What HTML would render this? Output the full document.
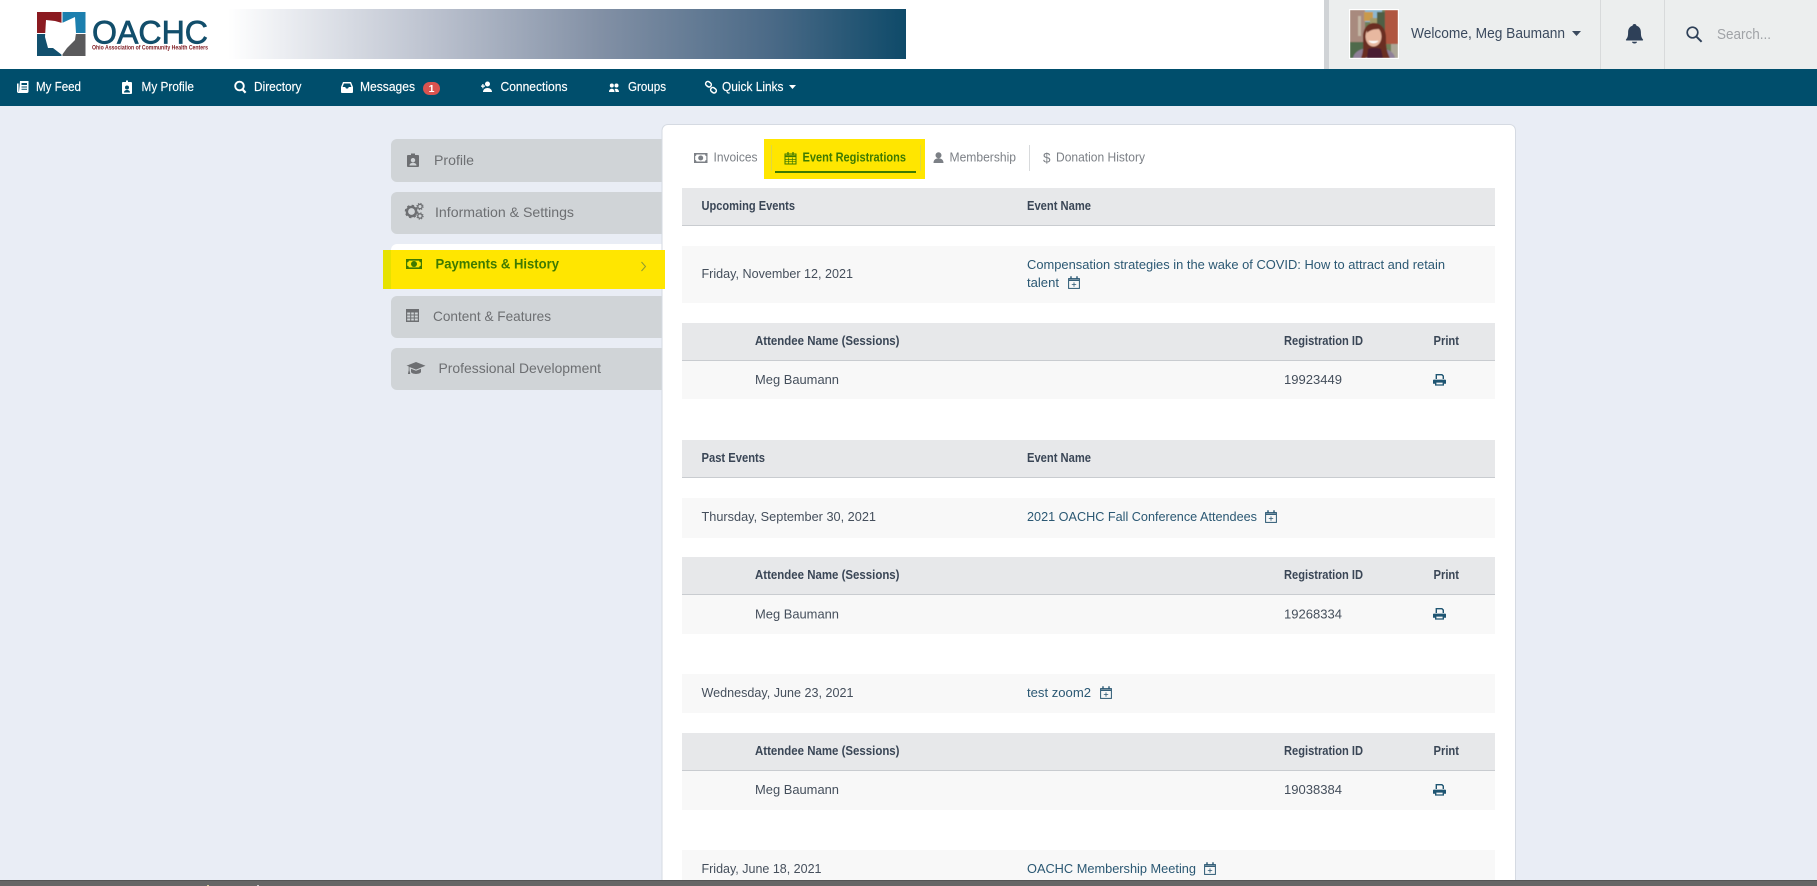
<!DOCTYPE html>
<html lang="en">
<head>
<meta charset="utf-8">
<title>Payments &amp; History</title>
<style>
html,body{margin:0;padding:0;width:1817px;height:886px;overflow:hidden;background:#e9edf5}
svg{display:block;position:absolute;left:0;top:0}
text{font-family:"Liberation Sans",Arial,sans-serif;font-size:13px;fill:#3d4a5a}
.nav{fill:#fff;stroke:#fff;stroke-width:.15;font-size:13px}
.th{font-weight:bold;font-size:12.5px;fill:#3a4656}
.td{fill:#454f5c}
.lnk{fill:#2b5873}
.side{font-size:14px;fill:#6d6f72}
.tab{font-size:12.5px;fill:#7c8086}
</style>
</head>
<body>
<svg width="1817" height="886" viewBox="0 0 1817 886" xmlns="http://www.w3.org/2000/svg">
<defs>
<linearGradient id="ban" x1="0" x2="1" y1="0" y2="0">
<stop offset="0" stop-color="#fff"/>
<stop offset=".08" stop-color="#eceef2"/>
<stop offset=".3" stop-color="#bcc2cf"/>
<stop offset=".55" stop-color="#8290a5"/>
<stop offset=".8" stop-color="#4b6a87"/>
<stop offset="1" stop-color="#0e4a69"/>
</linearGradient>
<filter id="soft" x="-5%" y="-5%" width="110%" height="110%"><feGaussianBlur stdDeviation=".45"/></filter>
<g id="cal" fill="none" stroke="#2b5873">
<rect x=".6" y="2.6" width="10.8" height="9.8" stroke-width="1"/>
<path d="M.6 4.200h10.800" stroke-width="1.500"/>
<path d="M3 .2v2.800M9 .2v2.800" stroke-width="1.400"/>
<path d="M6 6.400v4.400M3.800 8.600h4.400" stroke-width=".8"/>
</g>
<g id="prt" fill="#1f5572">
<path d="M2.600 0h6.600l1.800 1.800V5H9.600V2.400L8.600 1.400H4V5H2.600zM.8 5.600h11.400c.5 0 .8.400.8.800v3.400h-2v1.800H2v-1.800H0V6.400c0-.400.300-.8.800-.8zM3.400 8.600v1.800h6.200V8.600z"/>
</g>
</defs>

<!-- page -->
<rect width="1817" height="886" fill="#e9edf5"/>

<!-- header -->
<rect width="1817" height="69" fill="#fff"/>
<rect x="37" y="12" width="24.500" height="21" fill="#8a1a20"/>
<rect x="62.500" y="12" width="23" height="21" fill="#1c7fae"/>
<rect x="37" y="34" width="24.500" height="22" fill="#12506e"/>
<rect x="62.500" y="34" width="23" height="22" fill="#5a5a5c"/>
<polygon points="46,20 55,21 62,23 75,17 76,33 75,40 67,48 62,55 53,48 48,48 45,37" fill="#fff"/>
<text x="92" y="43.500" style="font-size:32px;fill:#124e6b;stroke:#124e6b;stroke-width:.7" textLength="116" lengthAdjust="spacingAndGlyphs">OACHC</text>
<text x="92" y="49.500" style="font-size:6.500px;font-weight:bold;fill:#7d1a20" textLength="116" lengthAdjust="spacingAndGlyphs">Ohio Association of Community Health Centers</text>
<rect x="228" y="9" width="678" height="50" fill="url(#ban)"/>

<rect x="1324" y="0" width="5" height="69" fill="#d0d3d6"/>
<rect x="1329" y="0" width="488" height="69" fill="#eceeee"/>
<rect x="1600" y="0" width="1" height="69" fill="#d8dadb"/>
<rect x="1664" y="0" width="1" height="69" fill="#d8dadb"/>

<!-- avatar -->
<rect x="1349" y="9" width="50" height="50" fill="#fff"/>
<svg x="1350" y="10" width="48" height="48" viewBox="0 0 48 48">
<g filter="url(#soft)">
<rect width="48" height="48" fill="#6f7f58"/>
<rect width="15" height="32" fill="#a88a7e"/>
<rect x="8" y="6" width="3" height="20" fill="#c4b6a4"/>
<rect x="15" width="17" height="12" fill="#8db8d0"/>
<rect x="14" y="2" width="9" height="9" fill="#c99a4c"/>
<rect x="20" y="8" width="10" height="12" fill="#a39a6a"/>
<rect x="27" y="2" width="8" height="20" fill="#4f5f44"/>
<rect x="35" width="13" height="34" fill="#b0563f"/>
<rect y="32" width="15" height="16" fill="#4f6a4c"/>
<rect x="41" y="34" width="7" height="14" fill="#aca696"/>
<path d="M3 48c1-6 7-9 14-10h14c7 1 13 4 14 10z" fill="#8f8098"/>
<path d="M11 48c3-7 2-14 2-21 0-9 5-14 11-14 7 0 12 6 12 14 0 7 0 14 4 21H33l-9-4-9 4z" fill="#6b2d22"/>
<ellipse cx="23.500" cy="26.500" rx="8" ry="10" fill="#e8b8a0"/>
<path d="M17 16c3-2 10-2 14 3-5 0-10 0-14 4z" fill="#6b2d22"/>
<path d="M18 39c3-1.500 10-1.500 13 0l2 9H17z" fill="#4a1e30"/>
<path d="M19 31c2.500 2.500 6.500 2.500 9 0-2 .6-7 .6-9 0z" fill="#fff" stroke="#fff" stroke-width=".8"/>
</g>
</svg>
<text x="1411" y="38" style="font-size:14.500px;fill:#3b4a5e" textLength="154" lengthAdjust="spacingAndGlyphs">Welcome, Meg Baumann</text>
<path d="M1572 31h9l-4.500 5z" fill="#3b4a5e"/>
<!-- bell -->
<path d="M1634.500 24c1.200 0 2 .8 2 1.800 3 .8 4.400 3.300 4.400 6.500 0 4 .6 5.500 2.100 7.200.3.400.1 1-.5 1h-16c-.6 0-.8-.6-.5-1 1.500-1.700 2.100-3.200 2.100-7.200 0-3.200 1.400-5.700 4.400-6.500 0-1 .8-1.800 2-1.800zM1632 41.800h5c0 1.200-1.100 1.700-2.500 1.700s-2.500-.5-2.500-1.700z" fill="#2e4058"/>
<!-- search -->
<circle cx="1692.500" cy="32.500" r="5.300" fill="none" stroke="#2e4058" stroke-width="1.700"/>
<path d="M1696.600 36.800l5 5" stroke="#2e4058" stroke-width="2"/>
<text x="1717" y="39" style="font-size:14.500px;fill:#a0a3a7" textLength="54" lengthAdjust="spacingAndGlyphs">Search...</text>

<!-- nav -->
<rect y="69" width="1817" height="37" fill="#004e6c"/>
<g fill="#fff">
<path d="M20 81h8.500v10.500c0 .8-.6 1.500-1.500 1.500h-8.500c-.8 0-1.500-.7-1.500-1.500V83.500h1.600v8c0 .3.300.3.400 0zM21.500 83v2h5.500v-2zM21.500 86.500v1h5.500v-1zM21.500 88.700v1h5.500v-1z" fill-rule="evenodd"/>
<path d="M123 82h3v-1.500h2V82h3c.6 0 1 .4 1 1v10c0 .6-.4 1-1 1h-8c-.6 0-1-.4-1-1V83c0-.6.400-1 1-1zm4 3.500a2 2 0 1 0 0 4 2 2 0 0 0 0-4zm-3 7h6c0-1.500-1.200-2.500-3-2.500s-3 1-3 2.500z" fill-rule="evenodd"/>
<path d="M343 82h8l2 5v5c0 .6-.4 1-1 1h-10c-.6 0-1-.4-1-1v-5zm.9 1.500L342.600 87h2.600l.8 1.500h2l.8-1.500h2.600l-1.300-3.500z" fill-rule="evenodd"/>
<path d="M485 84a2.500 2.500 0 1 1 5 0 2.500 2.500 0 0 1-5 0zM483 92c0-2.400 2-4 4.500-4s4.500 1.600 4.500 4zM481 85.500h1.300v-1.500h1.200v1.500h1.500v1.200h-1.500v1.500h-1.200v-1.500H481z"/>
<path d="M609 92c0-2 1.200-3.200 2.800-3.200S614.500 90 614.500 92zM615.500 92c0-1.200-.4-2.200-1-3 .5-.2 1-.3 1.500-.3 1.800 0 3 1.300 3 3.300zM609.800 85.500a2 2 0 1 1 4 0 2 2 0 0 1-4 0zM614.500 85.500a2 2 0 1 1 4 0 2 2 0 0 1-4 0z"/>
<path d="M789 85h7l-3.500 4z"/>
</g>
<g fill="none" stroke="#fff">
<circle cx="239.500" cy="86" r="4.300" stroke-width="1.900"/>
<path d="M242.600 89.500l3 3.200" stroke-width="2.200"/>
<rect x="705.500" y="82" width="6" height="4.500" rx="2.200" stroke-width="1.500" transform="rotate(38 708.500 84.200)"/>
<rect x="710.500" y="88" width="6" height="4.500" rx="2.200" stroke-width="1.500" transform="rotate(38 713.500 90.200)"/>
</g>
<text class="nav" x="36" y="91" textLength="45" lengthAdjust="spacingAndGlyphs">My Feed</text>
<text class="nav" x="141.500" y="91" textLength="52.500" lengthAdjust="spacingAndGlyphs">My Profile</text>
<text class="nav" x="254" y="91" textLength="47.500" lengthAdjust="spacingAndGlyphs">Directory</text>
<text class="nav" x="360" y="91" textLength="55" lengthAdjust="spacingAndGlyphs">Messages</text>
<rect x="423" y="82" width="17" height="13" rx="6.500" fill="#d9534f"/>
<text x="431.500" y="92" text-anchor="middle" style="font-size:10.500px;font-weight:bold;fill:#fff">1</text>
<text class="nav" x="500.500" y="91" textLength="67" lengthAdjust="spacingAndGlyphs">Connections</text>
<text class="nav" x="628" y="91" textLength="38" lengthAdjust="spacingAndGlyphs">Groups</text>
<text class="nav" x="722" y="91" textLength="61.500" lengthAdjust="spacingAndGlyphs">Quick Links</text>

<!-- sidebar -->
<rect x="391" y="139" width="290" height="43" rx="6" fill="#d0d4d7"/>
<rect x="391" y="192" width="290" height="42" rx="6" fill="#d0d4d7"/>
<rect x="391" y="244" width="290" height="43" rx="6" fill="#fff"/>
<rect x="391" y="296" width="290" height="42" rx="6" fill="#d0d4d7"/>
<rect x="391" y="348" width="290" height="42" rx="6" fill="#d0d4d7"/>

<g fill="#6d6f72">
<path d="M408 155h3v-1.500h4v1.500h3c.6 0 1 .4 1 1v10c0 .6-.4 1-1 1h-10c-.6 0-1-.4-1-1v-10c0-.6.400-1 1-1zm5 3a2.200 2.200 0 1 0 0 4.400 2.200 2.200 0 0 0 0-4.400zm-3.500 7.500h7c0-1.700-1.500-2.600-3.500-2.600s-3.500.900-3.500 2.600z" fill-rule="evenodd"/>
<circle cx="411.500" cy="211.500" r="4.600" fill="none" stroke="#6d6f72" stroke-width="2.400"/>
<circle cx="411.500" cy="211.500" r="6" fill="none" stroke="#6d6f72" stroke-width="1.500" stroke-dasharray="2.400 2.310"/>
<circle cx="420" cy="206.500" r="2.200" fill="none" stroke="#6d6f72" stroke-width="1.300"/>
<circle cx="420" cy="206.500" r="3.200" fill="none" stroke="#6d6f72" stroke-width=".9" stroke-dasharray="1.250 1.260"/>
<circle cx="420" cy="216" r="2.200" fill="none" stroke="#6d6f72" stroke-width="1.300"/>
<circle cx="420" cy="216" r="3.200" fill="none" stroke="#6d6f72" stroke-width=".9" stroke-dasharray="1.250 1.260"/>
<path d="M406 309h13v13h-13zM407.200 312.500v2h3v-2zm4 0v2h2.600v-2zm3.600 0v2h3v-2zm-7.600 3v2h3v-2zm4 0v2h2.600v-2zm3.600 0v2h3v-2zm-7.600 3v2h3v-2zm4 0v2h2.600v-2zm3.600 0v2h3v-2z" fill-rule="evenodd"/>
<path d="M416 362l9.500 3.800-9.500 3.800-6.500-2.600v3.200l.8 3.800h-2.400l.8-3.800V366.400l-2.200-.6zM411 368.800l5 2 5-2v3c0 1.400-2.600 2.200-5 2.200s-5-.8-5-2.200z"/>
</g>
<text class="side" x="434" y="165" textLength="40" lengthAdjust="spacingAndGlyphs">Profile</text>
<text class="side" x="435" y="217" textLength="139" lengthAdjust="spacingAndGlyphs">Information &amp; Settings</text>
<text class="side" x="433" y="321" textLength="118" lengthAdjust="spacingAndGlyphs">Content &amp; Features</text>
<text class="side" x="438.500" y="373" textLength="162.500" lengthAdjust="spacingAndGlyphs">Professional Development</text>

<!-- panel -->
<rect x="662" y="124.500" width="853.500" height="770" rx="6" fill="#fff" stroke="#d5dae2"/>

<!-- sidebar highlight (over panel edge) -->
<rect x="383" y="250" width="282" height="39" fill="#ffe600"/>
<rect x="383" y="250" width="8" height="39" fill="#e6e200"/>
<path d="M406 259h16v10h-16zm2.800 1.600c0 1-.6 1.700-1.600 1.700v3.400c1 0 1.600.7 1.600 1.700h10.400c0-1 .6-1.700 1.600-1.700v-3.400c-1 0-1.600-.7-1.600-1.700z" fill-rule="evenodd" fill="#3e7a00"/>
<circle cx="414" cy="264" r="3" fill="#3e7a00"/>
<text x="435.500" y="268.500" style="font-size:14px;font-weight:bold;fill:#3e7a00" textLength="123.500" lengthAdjust="spacingAndGlyphs">Payments &amp; History</text>
<path d="M641.500 262l4 4.500-4 4.500" fill="none" stroke="#8f9a30" stroke-width="1"/>

<!-- tabs -->
<rect x="764" y="139" width="161" height="40" fill="#ffe600"/>
<rect x="771" y="145" width="1" height="26" fill="#e0d840"/>
<rect x="920" y="145" width="1" height="26" fill="#e0d840"/>
<rect x="1029" y="145" width="1" height="26" fill="#d8dadc"/>
<rect x="775" y="171" width="141" height="2" fill="#3e7a00"/>

<path d="M694 153h13.500v10H694zm2.400 1.500c0 .9-.5 1.500-1.200 1.500v4c.7 0 1.200.6 1.200 1.500h8.700c0-.9.500-1.500 1.200-1.500v-4c-.7 0-1.200-.6-1.200-1.500z" fill-rule="evenodd" fill="#7c8086"/>
<circle cx="700.700" cy="158" r="2.500" fill="#7c8086"/>
<text class="tab" x="713.500" y="161.500" textLength="44" lengthAdjust="spacingAndGlyphs">Invoices</text>

<g fill="none" stroke="#3e7a00">
<rect x="785" y="154" width="11" height="10" stroke-width="1"/>
<path d="M785 156.200h11" stroke-width="1.800"/>
<path d="M788 152v3M793 152v3" stroke-width="1.300"/>
<path d="M788.700 157.500v6M792.300 157.500v6M785 159.500h11M785 161.700h11" stroke-width=".7"/>
</g>
<text x="802.500" y="161.500" style="font-size:12.500px;font-weight:bold;fill:#3e7a00" textLength="103.500" lengthAdjust="spacingAndGlyphs">Event Registrations</text>

<path d="M938.500 152.500a3 3 0 1 1 0 6 3 3 0 0 1 0-6zM933.500 163.200c0-3 2-4.700 5-4.700s5 1.700 5 4.700z" fill="#7c8086" transform="translate(0 -.2)"/>
<text class="tab" x="949.500" y="161.500" textLength="66.500" lengthAdjust="spacingAndGlyphs">Membership</text>

<text x="1043" y="162.500" style="font-size:13.500px;fill:#7c8086" textLength="7">$</text>
<text class="tab" x="1056" y="161.500" textLength="89" lengthAdjust="spacingAndGlyphs">Donation History</text>

<!-- Upcoming -->
<rect x="682" y="188" width="813" height="37" fill="#e7e8ea"/><rect x="682" y="225" width="813" height="1" fill="#c9ccd0"/>
<text class="th" x="701.500" y="210" textLength="93.500" lengthAdjust="spacingAndGlyphs">Upcoming Events</text>
<text class="th" x="1027" y="210" textLength="64" lengthAdjust="spacingAndGlyphs">Event Name</text>

<rect x="682" y="246" width="813" height="57" fill="#f8f8f8"/>
<text class="td" x="701.500" y="278" textLength="151.500" lengthAdjust="spacingAndGlyphs">Friday, November 12, 2021</text>
<text class="lnk" x="1027" y="269" textLength="418" lengthAdjust="spacingAndGlyphs">Compensation strategies in the wake of COVID: How to attract and retain</text>
<text class="lnk" x="1027" y="287" textLength="32" lengthAdjust="spacingAndGlyphs">talent</text>
<use href="#cal" x="1068" y="276"/>

<rect x="682" y="323" width="813" height="37" fill="#e7e8ea"/><rect x="682" y="360" width="813" height="1" fill="#c9ccd0"/>
<rect x="682" y="361" width="813" height="38" fill="#f8f8f8"/>
<text class="th" x="755" y="345" textLength="144.500" lengthAdjust="spacingAndGlyphs">Attendee Name (Sessions)</text>
<text class="th" x="1284" y="345" textLength="79" lengthAdjust="spacingAndGlyphs">Registration ID</text>
<text class="th" x="1433.500" y="345" textLength="25.500" lengthAdjust="spacingAndGlyphs">Print</text>
<text class="td" x="755" y="384" textLength="84" lengthAdjust="spacingAndGlyphs">Meg Baumann</text>
<text class="td" x="1284" y="384" textLength="58" lengthAdjust="spacingAndGlyphs">19923449</text>
<use href="#prt" x="1433" y="374"/>

<!-- Past -->
<rect x="682" y="440" width="813" height="37" fill="#e7e8ea"/><rect x="682" y="477" width="813" height="1" fill="#c9ccd0"/>
<text class="th" x="701.500" y="462" textLength="63.500" lengthAdjust="spacingAndGlyphs">Past Events</text>
<text class="th" x="1027" y="462" textLength="64" lengthAdjust="spacingAndGlyphs">Event Name</text>

<rect x="682" y="498" width="813" height="40" fill="#f8f8f8"/>
<text class="td" x="701.500" y="521" textLength="174.500" lengthAdjust="spacingAndGlyphs">Thursday, September 30, 2021</text>
<text class="lnk" x="1027" y="521" textLength="230" lengthAdjust="spacingAndGlyphs">2021 OACHC Fall Conference Attendees</text>
<use href="#cal" x="1265" y="510"/>

<rect x="682" y="557" width="813" height="37" fill="#e7e8ea"/><rect x="682" y="594" width="813" height="1" fill="#c9ccd0"/>
<rect x="682" y="595" width="813" height="39" fill="#f8f8f8"/>
<text class="th" x="755" y="579" textLength="144.500" lengthAdjust="spacingAndGlyphs">Attendee Name (Sessions)</text>
<text class="th" x="1284" y="579" textLength="79" lengthAdjust="spacingAndGlyphs">Registration ID</text>
<text class="th" x="1433.500" y="579" textLength="25.500" lengthAdjust="spacingAndGlyphs">Print</text>
<text class="td" x="755" y="618.500" textLength="84" lengthAdjust="spacingAndGlyphs">Meg Baumann</text>
<text class="td" x="1284" y="618.500" textLength="58" lengthAdjust="spacingAndGlyphs">19268334</text>
<use href="#prt" x="1433" y="608"/>

<rect x="682" y="674" width="813" height="39" fill="#f8f8f8"/>
<text class="td" x="701.500" y="697" textLength="152" lengthAdjust="spacingAndGlyphs">Wednesday, June 23, 2021</text>
<text class="lnk" x="1027" y="697" textLength="64" lengthAdjust="spacingAndGlyphs">test zoom2</text>
<use href="#cal" x="1100" y="686"/>

<rect x="682" y="733" width="813" height="37" fill="#e7e8ea"/><rect x="682" y="770" width="813" height="1" fill="#c9ccd0"/>
<rect x="682" y="771" width="813" height="39" fill="#f8f8f8"/>
<text class="th" x="755" y="755" textLength="144.500" lengthAdjust="spacingAndGlyphs">Attendee Name (Sessions)</text>
<text class="th" x="1284" y="755" textLength="79" lengthAdjust="spacingAndGlyphs">Registration ID</text>
<text class="th" x="1433.500" y="755" textLength="25.500" lengthAdjust="spacingAndGlyphs">Print</text>
<text class="td" x="755" y="794" textLength="84" lengthAdjust="spacingAndGlyphs">Meg Baumann</text>
<text class="td" x="1284" y="794" textLength="58" lengthAdjust="spacingAndGlyphs">19038384</text>
<use href="#prt" x="1433" y="784"/>

<rect x="682" y="850" width="813" height="30" fill="#f8f8f8"/>
<text class="td" x="701.500" y="873" textLength="120" lengthAdjust="spacingAndGlyphs">Friday, June 18, 2021</text>
<text class="lnk" x="1027" y="873" textLength="169" lengthAdjust="spacingAndGlyphs">OACHC Membership Meeting</text>
<use href="#cal" x="1204" y="862"/>

<!-- bottom bar -->
<rect y="880" width="1817" height="6" fill="#666"/>
<rect y="880" width="1817" height="1" fill="#555"/>
<rect x="207" y="885" width="2" height="1" fill="#d8cfa0"/>
<rect x="257" y="885" width="2" height="1" fill="#cccccc"/>
</svg>
</body>
</html>
